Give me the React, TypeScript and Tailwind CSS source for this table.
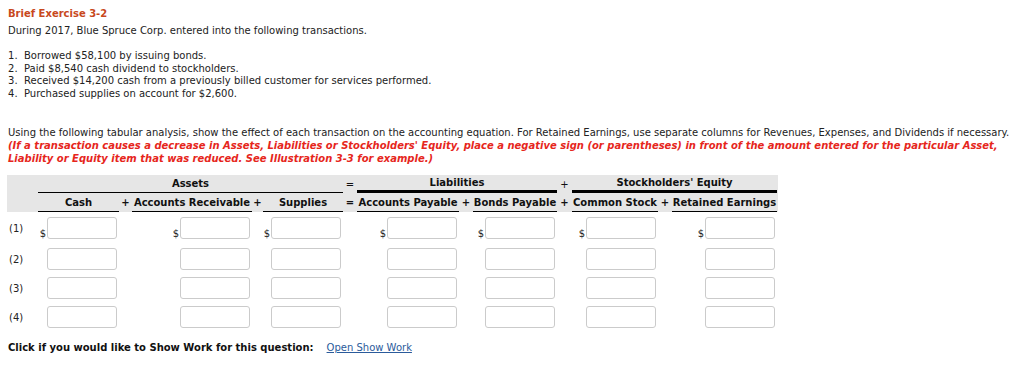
import React from 'react';

const cols =
    'grid grid-cols-[31px_81px_13px_120px_11px_80px_14px_102px_14px_84px_15px_86px_14px_105px]';

const transactions = [
    'Borrowed $58,100 by issuing bonds.',
    'Paid $8,540 cash dividend to stockholders.',
    'Received $14,200 cash from a previously billed customer for services performed.',
    'Purchased supplies on account for $2,600.',
];

// column index in the grid for each account field (ops sit between them)
const fields = [2, 4, 6, 8, 10, 12, 14];

const AmountCell: React.FC<{ col: number; dollar: boolean }> = ({ col, dollar }) => (
    <div className="flex items-end justify-end pr-[2px]" style={{ gridColumnStart: col }}>
        {dollar && <span className="mr-px leading-[11px]">$</span>}
        <input
            type="text"
            className="h-[22px] w-[70px] rounded-[3px] border border-[#cbcbcb] bg-white px-1 outline-none"
        />
    </div>
);

const ColHead: React.FC<{ children: React.ReactNode }> = ({ children }) => (
    <div className="flex h-[19px] items-center justify-center border-b border-black whitespace-nowrap">{children}</div>
);

const Op: React.FC<{ children: React.ReactNode }> = ({ children }) => (
    <div className="flex h-[19px] items-center justify-center">{children}</div>
);

export default function App() {
    return (
        <div className="min-h-screen bg-white px-[8px] font-['Verdana','DejaVu_Sans',sans-serif] text-[10px] text-[#222]">
            <h2 className="pt-[7px] text-[10px] leading-[13px] font-bold text-[#c8481c]">Brief Exercise 3-2</h2>
            <p className="mt-[4px] leading-[13px]">During 2017, Blue Spruce Corp. entered into the following transactions.</p>

            <ol className="mt-[13px]">
                {transactions.map((t, i) => (
                    <li key={i} className="flex leading-[12.5px]">
                        <span className="w-[16px]">{i + 1}.</span>
                        <span>{t}</span>
                    </li>
                ))}
            </ol>

            <p className="mt-[26px] leading-[13px]">
                Using the following tabular analysis, show the effect of each transaction on the accounting equation. For
                Retained Earnings, use separate columns for Revenues, Expenses, and Dividends if necessary.
            </p>
            <p className="leading-[13px] font-bold text-[#e6261c] italic">
                (If a transaction causes a decrease in Assets, Liabilities or Stockholders' Equity, place a negative sign (or
                parentheses) in front of the amount entered for the particular Asset,
                <br />
                Liability or Equity item that was reduced. See Illustration 3-3 for example.)
            </p>

            <div className="mt-[10px] -ml-px w-[771px] font-bold">
                <div className="bg-[#e6e6e6] text-[#111]">
                    {/* group headings */}
                    <div className={cols}>
                        <div className="col-start-2 col-end-7 flex h-[18px] items-center justify-center border-b border-black">
                            Assets
                        </div>
                        <div className="flex h-[18px] items-center justify-center font-normal">=</div>
                        <div className="col-span-3 flex h-[18px] items-center justify-center border-b-[3px] border-black">
                            Liabilities
                        </div>
                        <div className="flex h-[18px] items-center justify-center font-normal">+</div>
                        <div className="col-span-3 flex h-[18px] items-center justify-center border-b-[3px] border-black">
                            Stockholders' Equity
                        </div>
                    </div>
                    {/* account headings */}
                    <div className={cols}>
                        <div />
                        <ColHead>Cash</ColHead>
                        <Op>+</Op>
                        <ColHead>Accounts Receivable</ColHead>
                        <Op>+</Op>
                        <ColHead>Supplies</ColHead>
                        <Op>=</Op>
                        <ColHead>Accounts Payable</ColHead>
                        <Op>+</Op>
                        <ColHead>Bonds Payable</ColHead>
                        <Op>+</Op>
                        <ColHead>Common Stock</ColHead>
                        <Op>+</Op>
                        <ColHead>Retained Earnings</ColHead>
                    </div>
                </div>

                <div className="font-normal">
                    {[1, 2, 3, 4].map((n) => (
                        <div key={n} className={`${cols} ${n === 1 ? 'mt-[5px]' : n === 2 ? 'mt-[9px]' : 'mt-[7px]'}`}>
                            <div className="flex items-center pl-[2px]">({n})</div>
                            {fields.map((c) => (
                                <AmountCell key={c} col={c} dollar={n === 1} />
                            ))}
                        </div>
                    ))}
                </div>
            </div>

            <div className="mt-[13px] flex leading-[13px]">
                <span className="font-bold text-[#111]">Click if you would like to Show Work for this question:</span>
                <a href="#" className="ml-[13px] text-[#2b5b9b] underline">
                    Open Show Work
                </a>
            </div>
        </div>
    );
}
